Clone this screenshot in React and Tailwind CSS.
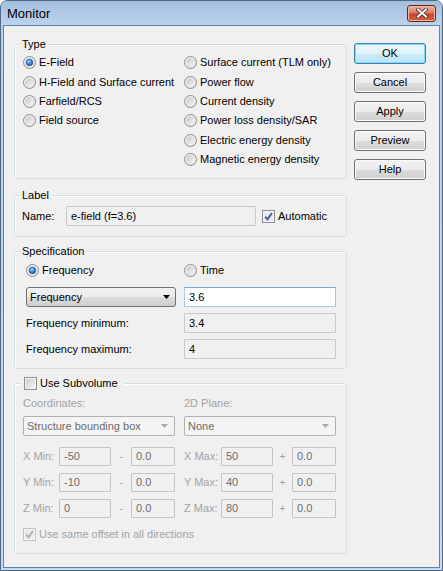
import React from "react";

function Defs() {
  return (
    <svg width="0" height="0" className="absolute">
      <defs>
        <linearGradient id="rOuter" x1="0" y1="0" x2="1" y2="1">
          <stop offset="0" stopColor="#f7f7f7" />
          <stop offset="1" stopColor="#dedede" />
        </linearGradient>
        <linearGradient id="rInner" x1="0" y1="0" x2="1" y2="1">
          <stop offset="0" stopColor="#c4c4c4" />
          <stop offset="1" stopColor="#f9f9f9" />
        </linearGradient>
        <radialGradient id="rDot" cx="0.4" cy="0.35" r="0.75">
          <stop offset="0" stopColor="#a6dcff" />
          <stop offset="0.45" stopColor="#3a8fdc" />
          <stop offset="1" stopColor="#0c4a92" />
        </radialGradient>
        <linearGradient id="cInner" x1="0" y1="0" x2="1" y2="1">
          <stop offset="0" stopColor="#c9cdd2" />
          <stop offset="1" stopColor="#f4f4f5" />
        </linearGradient>
      </defs>
    </svg>
  );
}

function Radio({ checked }) {
  return (
    <svg width="13" height="13" viewBox="0 0 13 13" className="shrink-0">
      <circle cx="6.5" cy="6.5" r="6" fill="url(#rOuter)" stroke="#8d8d8d" />
      <circle cx="6.5" cy="6.5" r="4.2" fill="url(#rInner)" />
      {checked && (
        <circle cx="6.5" cy="6.5" r="3.3" fill="url(#rDot)" stroke="#1a4f8a" strokeWidth="0.6" />
      )}
    </svg>
  );
}

function Check({ checked, disabled }) {
  return (
    <svg width="13" height="13" viewBox="0 0 13 13" className="shrink-0">
      <rect x="0.5" y="0.5" width="12" height="12" fill="#f4f4f4" stroke={disabled ? "#c4c4c4" : "#8e8f8f"} />
      <rect x="2" y="2" width="9" height="9" fill={disabled ? "#ececec" : checked ? "#e8ecf2" : "url(#cInner)"} />
      {checked && (
        <path
          d="M3.2 6.6 L5.4 9.4 L9.9 3.1"
          fill="none"
          stroke={disabled ? "#b2b2b2" : "#4b5f94"}
          strokeWidth="1.9"
        />
      )}
    </svg>
  );
}

function Btn({ children, def }) {
  return (
    <div
      className={
        def
          ? "h-[21px] w-[72px] rounded-[3px] border border-[#3c7fb1] bg-[linear-gradient(#ebf7fd_0%,#e0f3fc_50%,#cdebfa_51%,#bfe3f7_100%)] shadow-[inset_0_0_0_1px_#7fd8ff] flex items-center justify-center text-black"
          : "h-[21px] w-[72px] rounded-[3px] border border-[#707070] bg-[linear-gradient(#f2f2f2_0%,#ebebeb_50%,#dddddd_51%,#cfcfcf_100%)] shadow-[inset_0_0_0_1px_#fbfbfb] flex items-center justify-center text-black"
      }
    >
      {children}
    </div>
  );
}

function Group({ label, className, children }) {
  return (
    <div
      className={
        "relative w-[333px] rounded-[3px] border border-[#d5dfe5] shadow-[inset_1px_1px_0_#ffffff] " + className
      }
    >
      <div className="absolute left-[5px] top-[-7px] bg-[#f0f0f0] px-[2px] leading-[13px]">{label}</div>
      {children}
    </div>
  );
}

function RadioRow({ checked, children }) {
  return (
    <div className="flex h-[19.4px] items-center gap-[3px]">
      <Radio checked={checked} />
      <span>{children}</span>
    </div>
  );
}

function Arrow({ color }) {
  return (
    <svg width="7" height="4" viewBox="0 0 7 4" className="shrink-0">
      <polygon points="0,0 7,0 3.5,4" fill={color} />
    </svg>
  );
}

function DisField({ value, w }) {
  return (
    <div
      className={
        "h-[19px] rounded-[1px] border border-[#c5c5c5] bg-[#f0f0f0] pl-[4px] flex items-center text-[#6d6d6d] " + w
      }
    >
      {value}
    </div>
  );
}

function CoordRow({ a, b, c, d, e, f }) {
  return (
    <div className="grid h-[19px] grid-cols-[36px_52px_20px_44px_9px_37px_52px_19px_44px] items-center">
      <span className="text-[#a3a3a3]">{a}</span>
      <DisField value={b} w="w-[52px]" />
      <span className="text-center text-[#a3a3a3]">-</span>
      <DisField value={c} w="w-[44px]" />
      <span />
      <span className="text-[#a3a3a3]">{d}</span>
      <DisField value={e} w="w-[52px]" />
      <span className="text-center text-[#a3a3a3]">+</span>
      <DisField value={f} w="w-[44px]" />
    </div>
  );
}

export default function App() {
  return (
    <div className="w-[443px] h-[571px] font-['Liberation_Sans',Arial,sans-serif] text-[11px] leading-[13px] text-black">
      <Defs />
      <div className="flex h-full w-full flex-col rounded-t-[7px] border border-[#4f6886] bg-[linear-gradient(#b7cfea,#c6daf0)]">
        <div className="flex h-[24px] shrink-0 items-center justify-between rounded-t-[6px] bg-[linear-gradient(#a3bedf,#bdd3ec)] pl-[6px] pr-[6px]">
          <span className="text-[13px] leading-[15px] text-black">Monitor</span>
          <div className="flex h-[17px] w-[29px] items-center justify-center rounded-[3px] border border-[#6b2314] bg-[linear-gradient(#eab0a2_0%,#dc8670_40%,#c9472c_55%,#d4603f_100%)] shadow-[inset_0_0_0_1px_#f0b8a8]">
            <svg width="12" height="10" viewBox="0 0 12 10">
              <path d="M2 1.5 L10 8.5 M10 1.5 L2 8.5" stroke="#4a2a25" strokeWidth="3.6" strokeLinecap="square" />
              <path d="M2 1.5 L10 8.5 M10 1.5 L2 8.5" stroke="#ffffff" strokeWidth="2" strokeLinecap="square" />
            </svg>
          </div>
        </div>
        <div className="mx-[2px] mb-[2px] flex flex-1 border border-[#5f82aa] bg-[#f0f0f0]">
          <div className="flex flex-col pl-[10px] pt-[18px]">
            <Group label="Type" className="h-[135px]">
              <div className="grid grid-cols-[161px_1fr] pl-[8px] pt-[8px]">
                <div className="flex flex-col">
                  <RadioRow checked>E-Field</RadioRow>
                  <RadioRow>H-Field and Surface current</RadioRow>
                  <RadioRow>Farfield/RCS</RadioRow>
                  <RadioRow>Field source</RadioRow>
                </div>
                <div className="flex flex-col">
                  <RadioRow>Surface current (TLM only)</RadioRow>
                  <RadioRow>Power flow</RadioRow>
                  <RadioRow>Current density</RadioRow>
                  <RadioRow>Power loss density/SAR</RadioRow>
                  <RadioRow>Electric energy density</RadioRow>
                  <RadioRow>Magnetic energy density</RadioRow>
                </div>
              </div>
            </Group>

            <Group label="Label" className="mt-[16px] h-[42px]">
              <div className="flex h-full items-center pl-[7px]">
                <span className="w-[44px]">Name:</span>
                <div className="flex h-[20px] w-[190px] items-center rounded-[1px] border border-[#c9c9c9] bg-[#f0f0f0] pl-[4px]">
                  e-field (f=3.6)
                </div>
                <div className="ml-[6px] flex items-center gap-[3px]">
                  <Check checked />
                  <span>Automatic</span>
                </div>
              </div>
            </Group>

            <Group label="Specification" className="mt-[14px] h-[118px]">
              <div className="flex flex-col pl-[11px] pt-[9px]">
                <div className="grid h-[19px] grid-cols-[158px_1fr] items-center">
                  <div className="flex items-center gap-[3px]">
                    <Radio checked />
                    <span>Frequency</span>
                  </div>
                  <div className="flex items-center gap-[3px]">
                    <Radio />
                    <span>Time</span>
                  </div>
                </div>
                <div className="mt-[7px] flex">
                  <div className="flex h-[20px] w-[150px] items-center justify-between rounded-[3px] border border-[#707070] bg-[linear-gradient(#f2f2f2_0%,#ebebeb_50%,#dddddd_51%,#cfcfcf_100%)] pl-[3px] pr-[5px]">
                    <span>Frequency</span>
                    <Arrow color="#000000" />
                  </div>
                  <div className="ml-[8px] flex h-[20px] w-[152px] items-center rounded-[1px] border border-[#a8c9e6] border-t-[#7ea7cf] bg-white pl-[4px]">
                    3.6
                  </div>
                </div>
                <div className="mt-[6px] grid h-[20px] grid-cols-[158px_152px] items-center">
                  <span>Frequency minimum:</span>
                  <div className="flex h-[20px] items-center rounded-[1px] border border-[#c9c9c9] bg-[#f0f0f0] pl-[4px]">3.4</div>
                </div>
                <div className="mt-[6px] grid h-[20px] grid-cols-[158px_152px] items-center">
                  <span>Frequency maximum:</span>
                  <div className="flex h-[20px] items-center rounded-[1px] border border-[#c9c9c9] bg-[#f0f0f0] pl-[4px]">4</div>
                </div>
              </div>
            </Group>

            <div className="relative mt-[14px] h-[171px] w-[333px] rounded-[3px] border border-[#d5dfe5] shadow-[inset_1px_1px_0_#ffffff]">
              <div className="absolute left-[6px] top-[-7px] flex items-center gap-[3px] bg-[#f0f0f0] pl-[3px] pr-[6px] leading-[13px]">
                <Check />
                <span>Use Subvolume</span>
              </div>
              <div className="flex flex-col pl-[8px] pt-[10px]">
                <div className="grid h-[19px] grid-cols-[161px_1fr] items-center text-[#a3a3a3]">
                  <span>Coordinates:</span>
                  <span>2D Plane:</span>
                </div>
                <div className="mt-[3px] grid grid-cols-[161px_152px]">
                  <div className="flex h-[20px] w-[152px] items-center justify-between rounded-[2px] border border-[#adb2b5] bg-[#f4f4f4] pl-[3px] pr-[6px] text-[#6d6d6d]">
                    <span>Structure bounding box</span>
                    <Arrow color="#a8a8a8" />
                  </div>
                  <div className="flex h-[20px] w-[152px] items-center justify-between rounded-[2px] border border-[#adb2b5] bg-[#f4f4f4] pl-[3px] pr-[6px] text-[#6d6d6d]">
                    <span>None</span>
                    <Arrow color="#a8a8a8" />
                  </div>
                </div>
                <div className="mt-[11px] flex flex-col gap-[7px]">
                  <CoordRow a="X Min:" b="-50" c="0.0" d="X Max:" e="50" f="0.0" />
                  <CoordRow a="Y Min:" b="-10" c="0.0" d="Y Max:" e="40" f="0.0" />
                  <CoordRow a="Z Min:" b="0" c="0.0" d="Z Max:" e="80" f="0.0" />
                </div>
                <div className="mt-[7px] flex h-[19px] items-center gap-[3px]">
                  <Check checked disabled />
                  <span className="text-[#a3a3a3]">Use same offset in all directions</span>
                </div>
              </div>
            </div>
          </div>

          <div className="ml-[7px] flex flex-col gap-[8.2px] pt-[16.5px]">
            <Btn def>OK</Btn>
            <Btn>Cancel</Btn>
            <Btn>Apply</Btn>
            <Btn>Preview</Btn>
            <Btn>Help</Btn>
          </div>
        </div>
      </div>
    </div>
  );
}
